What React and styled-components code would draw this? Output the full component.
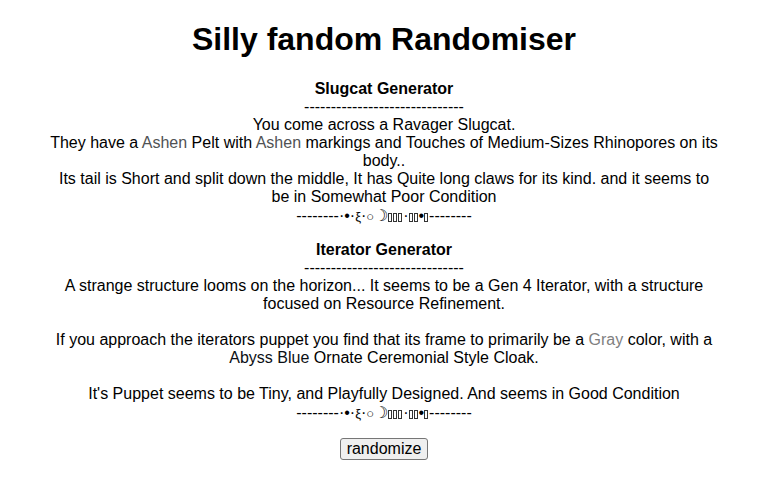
import React from 'react';
import styled, {createGlobalStyle} from 'styled-components';

const GlobalStyle = createGlobalStyle`
    body {
        margin: 0;
        background: #fff;
        color: #000;
        font-family: "Liberation Sans", Arial, sans-serif;
        font-size: 16px;
    }
`;

const Page = styled.div`
    display: flex;
    flex-direction: column;
    align-items: center;
    text-align: center;
`;

const Title = styled.h1`
    font-size: 32px;
    font-weight: bold;
    margin: 21.44px 0;
`;

const Section = styled.section`
    width: 668px;
    margin-bottom: 16px;
`;

const Heading = styled.div`
    font-weight: bold;
`;

const Line = styled.div`
    min-height: 18px;
`;

const Tint = styled.span`
    color: ${props => props.$color};
`;

const Small = styled.span`
    font-size: 13px;
`;

// empty box, like a glyph the font doesn't have
const Tofu = styled.span`
    display: inline-block;
    width: 4px;
    height: 9px;
    margin-right: 1px;
    border: 1px solid #333;
    box-sizing: border-box;
    vertical-align: -1px;
`;

const Button = styled.button`
    font-family: inherit;
    font-size: 16px;
    padding: 1px 6px;
    background: #efefef;
    color: #000;
    border: 1px solid #767676;
    border-radius: 3px;
`;

const divider = '------------------------------';

const Flourish = () => (
    <Line>
        --------·•·<Small>ξ</Small>·<Small>○</Small>☽<Tofu /><Tofu /><Tofu />·<Tofu /><Tofu />•<Tofu />--------
    </Line>
);

const App = () => {
    return (
        <Page>
            <GlobalStyle />
            <Title>Silly fandom Randomiser</Title>
            <Section>
                <Heading>Slugcat Generator</Heading>
                <Line>{divider}</Line>
                <Line>You come across a Ravager Slugcat.</Line>
                <Line>
                    They have a <Tint $color="#505254">Ashen</Tint> Pelt with <Tint $color="#505254">Ashen</Tint> markings and Touches of Medium-Sizes Rhinopores on its body..
                </Line>
                <Line>
                    Its tail is Short and split down the middle, It has Quite long claws for its kind. and it seems to be in Somewhat Poor Condition
                </Line>
                <Flourish />
            </Section>
            <Section>
                <Heading>Iterator Generator</Heading>
                <Line>{divider}</Line>
                <Line>
                    A strange structure looms on the horizon... It seems to be a Gen 4 Iterator, with a structure focused on Resource Refinement.
                </Line>
                <Line />
                <Line>
                    If you approach the iterators puppet you find that its frame to primarily be a <Tint $color="#808080">Gray</Tint> color, with a <Tint $color="#0b0f14">Abyss Blue</Tint> Ornate Ceremonial Style Cloak.
                </Line>
                <Line />
                <Line>It's Puppet seems to be Tiny, and Playfully Designed. And seems in Good Condition</Line>
                <Flourish />
            </Section>
            <Button>randomize</Button>
        </Page>
    );
};

export default App;
